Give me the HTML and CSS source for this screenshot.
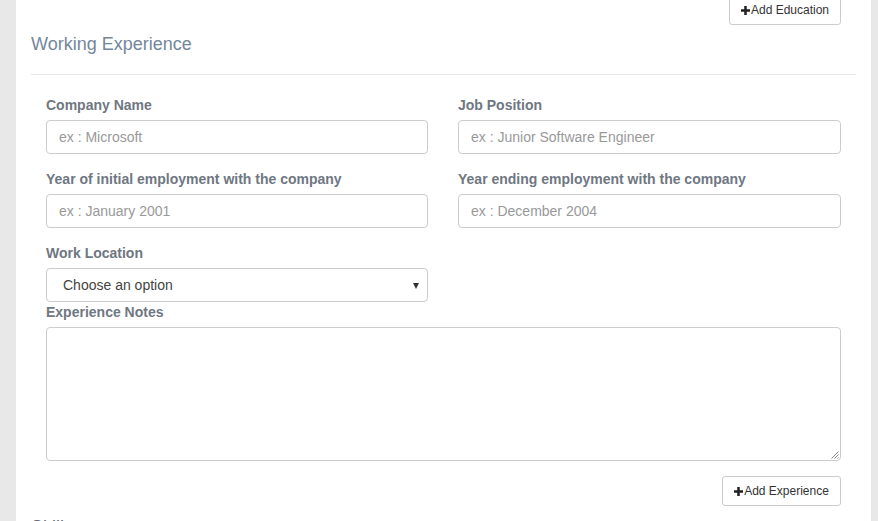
FILE: index.html
```html
<!DOCTYPE html>
<html>
<head>
<meta charset="utf-8">
<link rel="stylesheet" href="styles.css">
</head>
<body>
<div class="panel">
  <div class="top-actions">
    <button class="btn"><svg class="plus" viewBox="0 0 10 10"><path d="M3.6 0h2.8v3.6H10v2.8H6.4V10H3.6V6.4H0V3.6h3.6z"/></svg>Add Education</button>
  </div>
  <div class="section-title"><h2>Working Experience</h2></div>
  <div class="form">
    <div class="grid">
      <div class="group">
        <label>Company Name</label>
        <div class="input placeholder">ex : Microsoft</div>
      </div>
      <div class="group">
        <label>Job Position</label>
        <div class="input placeholder">ex : Junior Software Engineer</div>
      </div>
      <div class="group">
        <label>Year of initial employment with the company</label>
        <div class="input placeholder">ex : January 2001</div>
      </div>
      <div class="group">
        <label>Year ending employment with the company</label>
        <div class="input placeholder">ex : December 2004</div>
      </div>
      <div class="group tight">
        <label>Work Location</label>
        <div class="input select"><span>Choose an option</span><span class="caret"></span></div>
      </div>
    </div>
    <div class="group">
      <label>Experience Notes</label>
      <div class="textarea"><svg class="grip" viewBox="0 0 9 9"><path d="M8.5 1.5L1.5 8.5M8.5 4.5L4.5 8.5M8.5 7.5L7.5 8.5" stroke="#888" stroke-width="1" fill="none"/></svg></div>
    </div>
    <div class="actions">
      <button class="btn"><svg class="plus" viewBox="0 0 10 10"><path d="M3.6 0h2.8v3.6H10v2.8H6.4V10H3.6V6.4H0V3.6h3.6z"/></svg>Add Experience</button>
    </div>
  </div>
  <div class="section-title next"><h2>Skills</h2></div>
</div>
</body>
</html>
```

FILE: styles.css
```css
* { box-sizing: border-box; }
html, body { margin: 0; padding: 0; }
body {
  background: #e8e8e8;
  font-family: "Liberation Sans", Arial, sans-serif;
  height: 521px;
  overflow: hidden;
}
.panel {
  margin-left: 16px;
  width: 855px;
  background: #fff;
  padding: 0 15px;
  min-height: 560px;
}
.top-actions {
  display: flex;
  justify-content: flex-end;
  height: 25px;
  padding-right: 15px;
}
.top-actions .btn { margin-top: -5px; width: 112px; }
.btn {
  display: inline-flex;
  align-items: center;
  justify-content: center;
  height: 30px;
  padding: 0 10px;
  background: #fff;
  border: 1px solid #ccc;
  border-radius: 3px;
  font-family: "Liberation Sans", Arial, sans-serif;
  font-size: 12px;
  color: #333;
}
.plus { width: 9px; height: 9px; fill: #222; margin-right: 1px; }
.section-title {
  padding-top: 9px;
  padding-bottom: 20px;
  border-bottom: 1px solid #e8e8e8;
}
.section-title h2 {
  margin: 0;
  font-size: 18px;
  line-height: 20px;
  font-weight: normal;
  color: #73879c;
}
.section-title.next { border: none; padding-top: 11px; }
.section-title.next h2 { color: #666b73; }
.form { padding: 20px 15px 0; }
.grid {
  display: grid;
  grid-template-columns: 382px 1fr;
  column-gap: 30px;
}
.group { margin-bottom: 15px; }
.group.tight { margin-bottom: 0; }
label {
  display: block;
  font-size: 14px;
  line-height: 20px;
  font-weight: bold;
  color: #6f7782;
  margin-bottom: 5px;
}
.input {
  height: 34px;
  border: 1px solid #ccc;
  border-radius: 4px;
  padding: 0 12px;
  display: flex;
  align-items: center;
  font-size: 14px;
}
.placeholder { color: #999; }
.select {
  color: #444;
  padding-left: 16px;
  padding-right: 8px;
  justify-content: space-between;
}
.caret {
  width: 0; height: 0;
  border-left: 3px solid transparent;
  border-right: 3px solid transparent;
  border-top: 6px solid #333;
  margin-top: 1px;
}
.textarea {
  height: 134px;
  border: 1px solid #ccc;
  border-radius: 4px;
  position: relative;
}
.grip {
  position: absolute;
  right: 1px;
  bottom: 1px;
  width: 9px;
  height: 9px;
}
.actions {
  display: flex;
  justify-content: flex-end;
}
.actions .btn { width: 119px; }
```
